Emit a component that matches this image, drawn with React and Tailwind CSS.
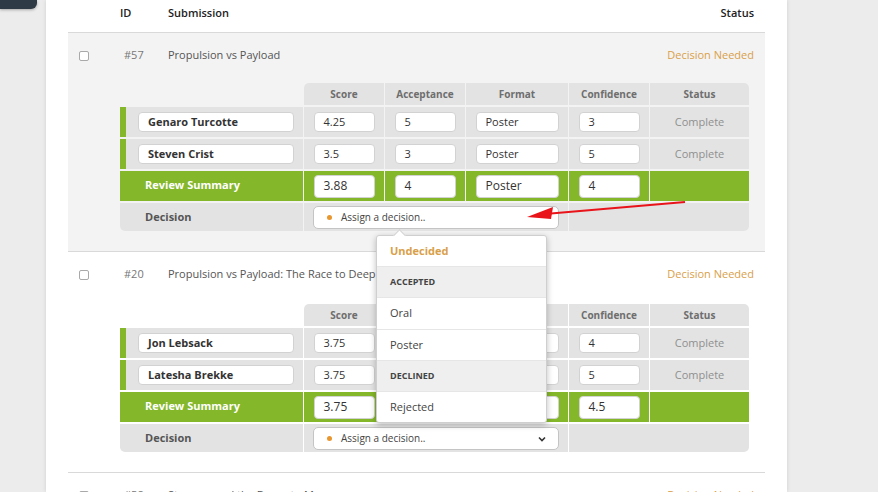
import React from "react";

const F = { fontFamily: '"Open Sans", "Noto Sans", sans-serif' };

function Inp({ children, bold, big, className = "" }) {
  return (
    <div
      className={`flex items-center bg-white border border-[#d2d2d2] rounded-[4px] pl-[9px] text-[#333] ${
        big ? "h-[23px] text-[12px]" : "h-[20px] text-[11px]"
      } ${bold ? "font-bold" : ""} ${className}`}
    >
      {children}
    </div>
  );
}

function Cell({ children, green, className = "" }) {
  return (
    <div
      className={`flex items-center justify-center ${green ? "bg-[#84b72a]" : "bg-[#e3e3e3]"} ${className}`}
    >
      {children}
    </div>
  );
}

function ReviewerRow({ name, s, a, f, c }) {
  return (
    <>
      <div className="bg-[#e3e3e3] h-[30px] flex items-center border-l-[6px] border-[#84b72a] pl-[12px] pr-[9px]">
        <Inp bold className="w-full">{name}</Inp>
      </div>
      <Cell><Inp className="w-[61px]">{s}</Inp></Cell>
      <Cell><Inp className="w-[61px]">{a}</Inp></Cell>
      <Cell><Inp className="w-[83px]">{f}</Inp></Cell>
      <Cell><Inp className="w-[61px]">{c}</Inp></Cell>
      <Cell><span className="text-[11px] text-[#8f8f8f]">Complete</span></Cell>
    </>
  );
}

function InnerTable({ reviewers, summary, chevron }) {
  return (
    <div className="ml-[52px] w-[629px] grid grid-cols-[183px_80px_80px_102px_80px_99px] gap-x-[1px] gap-y-[2px]">
      <div />
      {["Score", "Acceptance", "Format", "Confidence", "Status"].map((h, i) => (
        <div
          key={h}
          className={`h-[22px] bg-[#e3e3e3] flex items-center justify-center text-[10px] font-bold text-[#6e6e6e] ${
            i === 0 ? "rounded-tl-[5px]" : ""
          } ${i === 4 ? "rounded-tr-[5px]" : ""}`}
        >
          {h}
        </div>
      ))}
      {reviewers.map((r) => (
        <ReviewerRow key={r.name} {...r} />
      ))}
      <div className="bg-[#84b72a] h-[30px] flex items-center pl-[25px] pb-[2px] text-[11px] font-bold text-white">
        Review Summary
      </div>
      <Cell green><Inp big className="w-[61px]">{summary.s}</Inp></Cell>
      <Cell green><Inp big className="w-[61px]">{summary.a}</Inp></Cell>
      <Cell green><Inp big className="w-[83px]">{summary.f}</Inp></Cell>
      <Cell green><Inp big className="w-[61px]">{summary.c}</Inp></Cell>
      <Cell green />
      <div className="bg-[#e3e3e3] h-[28px] flex items-center pl-[25px] text-[11px] font-bold text-[#555] rounded-bl-[5px]">
        Decision
      </div>
      <div className="col-span-3 bg-[#e3e3e3] flex items-center pl-[9px] pr-[9px]">
        <div className="relative w-full h-[23px] bg-white border border-[#c4c4c4] rounded-[5px] flex items-center pl-[13px] text-[10px] text-[#444]">
          <span className="w-[5px] h-[5px] rounded-full bg-[#e8962e] mr-[9px]" />
          Assign a decision..
          {chevron && (
            <svg className="absolute right-[12px] top-[8px]" width="8" height="6" viewBox="0 0 8 6">
              <path d="M1 1.5 L4 4.5 L7 1.5" fill="none" stroke="#333" strokeWidth="1.6" />
            </svg>
          )}
        </div>
      </div>
      <div className="col-span-2 bg-[#e3e3e3] rounded-br-[5px]" />
    </div>
  );
}

function Row({ id, title, selected, children }) {
  return (
    <div className={`border-b border-[#d9d9d9] ${selected ? "bg-[#f3f3f3]" : "bg-white"}`}>
      <div className="h-[45px] flex items-center">
        <div className="w-[52px] flex items-center">
          <div className="ml-[11px] w-[10px] h-[10px] rounded-[2px] border border-[#a9a9a9] bg-white" />
        </div>
        <div className="w-[48px] pl-[4px] text-[11px] text-[#777]">{id}</div>
        <div className="flex-1 text-[11px] text-[#555] whitespace-nowrap overflow-hidden">{title}</div>
        <div className="pr-[11px] text-[11px] text-[#d9a049]">Decision Needed</div>
      </div>
      {children}
    </div>
  );
}

export default function App() {
  return (
    <div className="relative w-[878px] h-[492px] overflow-hidden bg-[#ececec] flex" style={F}>
      <div className="w-[46px] shrink-0">
        <div className="w-[37px] h-[9px] bg-[#2e3a45] rounded-br-[6px] shadow-[0_1px_3px_rgba(0,0,0,0.3)]" />
      </div>
      <div className="w-[741px] shrink-0 bg-white shadow-[0_0_4px_rgba(0,0,0,0.12)] px-[22px]">
        <div className="h-[33px] flex items-center pb-[6px] border-b border-[#d9d9d9] text-[11px] font-semibold text-[#222]">
          <div className="w-[52px]" />
          <div className="w-[48px]">ID</div>
          <div className="flex-1">Submission</div>
          <div className="pr-[11px]">Status</div>
        </div>
        <Row id="#57" title="Propulsion vs Payload" selected>
          <div className="pt-[5px] pb-[20px]">
            <InnerTable
              reviewers={[
                { name: "Genaro Turcotte", s: "4.25", a: "5", f: "Poster", c: "3" },
                { name: "Steven Crist", s: "3.5", a: "3", f: "Poster", c: "5" },
              ]}
              summary={{ s: "3.88", a: "4", f: "Poster", c: "4" }}
            />
          </div>
        </Row>
        <Row id="#20" title="Propulsion vs Payload: The Race to Deep Space">
          <div className="pt-[7px] pb-[20px]">
            <InnerTable
              chevron
              reviewers={[
                { name: "Jon Lebsack", s: "3.75", a: "", f: "", c: "4" },
                { name: "Latesha Brekke", s: "3.75", a: "", f: "", c: "5" },
              ]}
              summary={{ s: "3.75", a: "", f: "", c: "4.5" }}
            />
          </div>
        </Row>
        <Row id="#58" title="Stars around the Dome to Mars" />
      </div>

      {/* Dropdown overlay */}
      <div className="absolute left-[376px] top-[235px] w-[171px] bg-white border border-[#cfcfcf] rounded-[3px] shadow-[0_2px_6px_rgba(0,0,0,0.25)]">
        <div className="absolute -top-[5px] left-[18px] w-[9px] h-[9px] bg-white border-l border-t border-[#cfcfcf] rotate-45" />
        <div className="relative h-[31px] flex items-center pl-[13px] text-[11px] font-bold text-[#d9a049] border-b border-[#e6e6e6]">
          Undecided
        </div>
        <div className="h-[31px] flex items-center pl-[13px] text-[9px] font-bold text-[#444] bg-[#efefef] border-b border-[#e6e6e6]">
          ACCEPTED
        </div>
        <div className="h-[32px] flex items-center pl-[13px] text-[11px] text-[#444] border-b border-[#e6e6e6]">
          Oral
        </div>
        <div className="h-[31px] flex items-center pl-[13px] text-[11px] text-[#444] border-b border-[#e6e6e6]">
          Poster
        </div>
        <div className="h-[31px] flex items-center pl-[13px] text-[9px] font-bold text-[#444] bg-[#efefef] border-b border-[#e6e6e6]">
          DECLINED
        </div>
        <div className="h-[30px] flex items-center pl-[13px] text-[11px] text-[#444]">Rejected</div>
      </div>

      {/* Red annotation arrow */}
      <svg className="absolute left-0 top-0 pointer-events-none" width="878" height="492">
        <line x1="685" y1="202" x2="545" y2="214" stroke="#e8141a" strokeWidth="2.2" />
        <polygon points="527,217 553,207 551,219" fill="#e8141a" />
      </svg>
    </div>
  );
}
